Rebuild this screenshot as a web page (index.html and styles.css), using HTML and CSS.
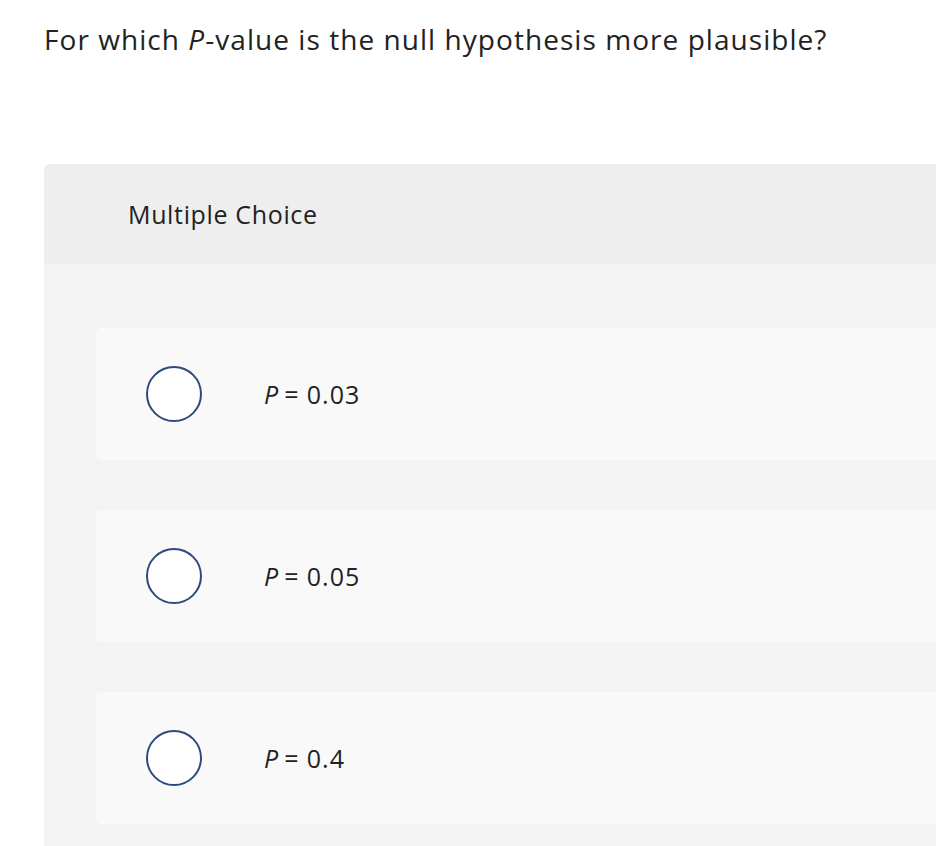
FILE: index.html
```html
<html>
<head>
<meta http-equiv="content-type" content="text/html; charset=UTF-8">
<link rel="stylesheet" href="styles.css">
</head>
<body>
<div class="question_div">
	<p class="question_text">For which <i>P</i>-value is the null hypothesis more plausible?</p>
</div>
<div class="choice_panel">
	<div class="choice_head">Multiple Choice</div>
	<div class="choice_body">
		<div class="choice_row">
			<span class="radio_btn"></span>
			<span class="choice_text"><i>P</i><span class="eq">=</span>0.03</span>
		</div>
		<div class="choice_row">
			<span class="radio_btn"></span>
			<span class="choice_text"><i>P</i><span class="eq">=</span>0.05</span>
		</div>
		<div class="choice_row">
			<span class="radio_btn"></span>
			<span class="choice_text"><i>P</i><span class="eq">=</span>0.4</span>
		</div>
	</div>
</div>
</body>
</html>
```

FILE: styles.css
```css
html, body { margin:0; padding:0; background:#ffffff; overflow:hidden; }
body { width:936px; height:846px; font-family:"Open Sans", "Liberation Sans", sans-serif; color:#222222; }
.question_div { padding:19px 0 0 44px; }
.question_text { margin:0; font-size:28px; line-height:40px; letter-spacing:1.05px; }
.choice_panel { margin:105px 0 0 44px; border-radius:5px 0 0 0; overflow:hidden; }
.choice_head { height:100px; display:flex; align-items:center; padding-left:84px; background:#eeeeee; font-size:25px; letter-spacing:0.65px; }
.choice_body { background:#f3f3f3; padding:64px 0 40px 52px; display:flex; flex-direction:column; gap:50px; }
.choice_row { height:132px; background:#f9f9f9; border-radius:5px 0 0 5px; display:flex; align-items:center; padding-left:50px; }
.radio_btn { width:52px; height:52px; border:2px solid #2c4b7c; border-radius:50%; background:#ffffff; }
.choice_text { margin-left:62px; font-size:25px; letter-spacing:1.1px; }
.choice_text .eq { margin:0 7px 0 5px; }
```
